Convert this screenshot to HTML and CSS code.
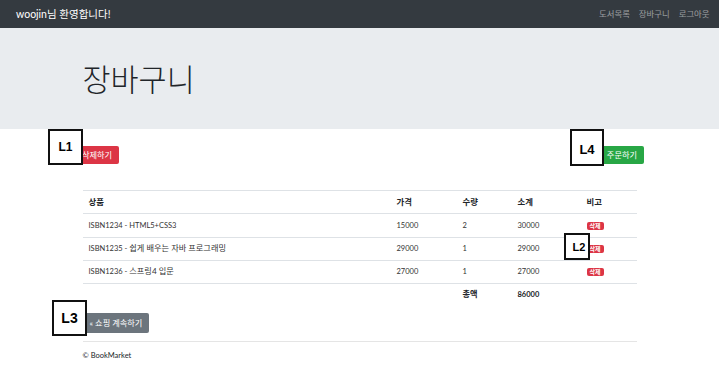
FILE: index.html
```html
<!DOCTYPE html>
<html lang="ko">
<head>
<meta charset="utf-8">
<title>장바구니</title>
<link rel="stylesheet" href="styles.css">
</head>
<body>
<nav class="navbar">
  <a class="brand">woojin님 환영합니다!</a>
  <ul class="nav-links">
    <li>도서목록</li>
    <li>장바구니</li>
    <li>로그아웃</li>
  </ul>
</nav>
<div class="jumbotron">
  <div class="container">
    <h1 class="display">장바구니</h1>
  </div>
</div>
<div class="container">
  <div class="row actions">
    <a class="btn btn-danger">삭제하기</a>
    <a class="btn btn-success">주문하기</a>
  </div>
  <table class="table">
    <thead>
      <tr><th class="c1">상품</th><th class="c2">가격</th><th class="c3">수량</th><th class="c4">소계</th><th class="c5">비고</th></tr>
    </thead>
    <tbody>
      <tr class="first"><td>ISBN1234 - HTML5+CSS3</td><td>15000</td><td>2</td><td>30000</td><td><span class="badge">삭제</span></td></tr>
      <tr><td>ISBN1235 - <span class="ko">쉽게 배우는 자바 프로그래밍</span></td><td>29000</td><td>1</td><td>29000</td><td><span class="badge">삭제</span></td></tr>
      <tr><td>ISBN1236 - <span class="ko">스프링4 입문</span></td><td>27000</td><td>1</td><td>27000</td><td><span class="badge">삭제</span></td></tr>
      <tr class="total"><th></th><th></th><th><span class="ko">총액</span></th><th>86000</th><th></th></tr>
    </tbody>
  </table>
  <a class="btn btn-secondary">« 쇼핑 계속하기</a>
  <hr class="rule">
  <footer class="footer"><p>© BookMarket</p></footer>
</div>

<div class="label l1">L1</div>
<div class="label l4">L4</div>
<div class="label l2">L2</div>
<div class="label l3">L3</div>
</body>
</html>
```
FILE: styles.css
```css
* { box-sizing: border-box; }
html, body { margin: 0; padding: 0; }
body {
  font-family: "Lato", "Noto Sans CJK KR", sans-serif;
  font-size: 7.5px;
  line-height: 12px;
  color: #212529;
  background: #fff;
  position: relative;
  width: 719px;
  min-height: 372px;
}
.navbar {
  height: 28px;
  background: #343a40;
  display: flex;
  align-items: center;
  padding: 0 5px 0 16px;
}
.brand {
  color: #fff;
  font-size: 10.5px;
  line-height: 14px;
}
.nav-links {
  list-style: none;
  margin: 0 0 0 auto;
  padding: 0;
  display: flex;
}
.nav-links li {
  padding: 0 4.5px;
  color: rgba(255,255,255,.5);
  font-size: 8.4px;
}
.jumbotron {
  background: #e9ecef;
  padding: 32.5px 0 32.5px;
  margin-bottom: 17px;
}
.container {
  width: 554px;
  margin: 0 auto;
}
.display {
  margin: 0;
  font-size: 30.5px;
  line-height: 36px;
  font-weight: 300;
  color: #212529;
}
.row { margin: 0 -7.5px; }
.actions {
  display: flex;
  justify-content: space-between;
  height: 18px;
  margin-bottom: 26px;
}
.btn {
  display: inline-block;
  color: #fff;
  font-size: 8.2px;
  line-height: 12px;
  padding: 3px 7px;
  border-radius: 2px;
}
.btn-danger { background: #dc3545; }
.btn-success { background: #28a745; }
.btn-secondary { background: #6c757d; padding: 4px 7px; }
.table {
  width: 554px;
  border-collapse: separate;
  border-spacing: 0;
  table-layout: fixed;
  margin-bottom: 7px;
  color: #333;
}
.table th, .table td {
  text-align: left;
  padding: 5px 6px;
  border-top: 1px solid #dee2e6;
  vertical-align: top;
  white-space: nowrap;
  height: 23px;
  line-height: 12px;
}
.table th { font-weight: 700; color: #212529; }
.table thead th {
  padding: 5px 6px 5px;
  border-bottom: 1px solid #dee2e6;
  font-size: 8.4px;
  height: 24px;
}
.ko { font-size: 8.2px; line-height: 8px; }
.table tr.first td { border-top: 0; padding-top: 6px; }
.c1 { width: 308px; }
.c2 { width: 66px; }
.c3 { width: 55px; }
.c4 { width: 69px; }
.c5 { width: 56px; }
.badge {
  display: inline-block;
  background: #dc3545;
  color: #fff;
  font-size: 6px;
  font-weight: 700;
  line-height: 8px;
  padding: 0 3px;
  border-radius: 2px;
  vertical-align: middle;
}
.rule {
  border: 0;
  border-top: 1px solid rgba(0,0,0,.1);
  margin: 8px 0;
}
.footer p { margin: 0; color: #212529; }
.label {
  position: absolute;
  background: #fff;
  border: 2px solid #111;
  display: flex;
  align-items: center;
  justify-content: center;
  font-family: "Liberation Sans", Arial, sans-serif;
  font-weight: 700;
  color: #000;
}
.l1 { left: 48px; top: 129px; width: 35px; height: 36px; font-size: 12px; }
.l4 { left: 570px; top: 129px; width: 34px; height: 37px; font-size: 13px; padding-top: 5px; }
.l2 { left: 564px; top: 233px; width: 26px; height: 27px; font-size: 11px; padding-left: 4px; }
.l3 { left: 52px; top: 300px; width: 35px; height: 36px; font-size: 14px; }
```
